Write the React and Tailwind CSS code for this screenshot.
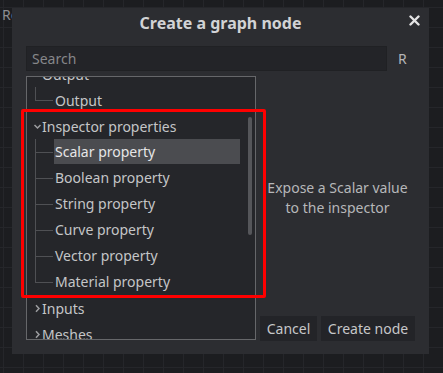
import React from 'react'

const font = { fontFamily: '"Noto Sans", "Open Sans", sans-serif' }

const Chevron = ({ open }) => (
  <svg width="9" height="9" viewBox="0 0 9 9" className="shrink-0">
    {open ? (
      <polyline points="1.5,3 4.5,6 7.5,3" fill="none" stroke="#9c9da0" strokeWidth="1.5" />
    ) : (
      <polyline points="3,1.2 6,4.5 3,7.8" fill="none" stroke="#9c9da0" strokeWidth="1.5" />
    )}
  </svg>
)

const GroupRow = ({ label, open }) => (
  <div className="flex items-center h-[26px] pl-[5px]">
    <div className="w-[10px] flex justify-center">
      <Chevron open={open} />
    </div>
    <span className="text-[14px] text-[#c4c5c7] whitespace-nowrap">{label}</span>
  </div>
)

const ChildRow = ({ label, last, selected }) => (
  <div className="flex h-[26px] pl-[8px] pr-[15px]">
    <div className="relative w-[19px] shrink-0">
      <div className={`absolute left-0 top-0 w-px bg-[#4f5054] ${last ? 'h-[13px]' : 'h-full'}`} />
      <div className="absolute left-0 top-[13px] w-[18px] h-px bg-[#4f5054]" />
    </div>
    <div
      className={`flex-1 flex items-center h-[25px] pl-px text-[14px] whitespace-nowrap ${
        selected ? 'bg-[#4b4c50] text-[#e6e6e7]' : 'text-[#c4c5c7]'
      }`}
    >
      {label}
    </div>
  </div>
)

const properties = [
  'Scalar property',
  'Boolean property',
  'String property',
  'Curve property',
  'Vector property',
  'Material property',
]

export default function App() {
  return (
    <div
      className="relative w-[443px] h-[373px] overflow-hidden bg-[#1c1d20]"
      style={{
        ...font,
        backgroundImage:
          'linear-gradient(to right, #25262a 1px, transparent 1px), linear-gradient(to bottom, #25262a 1px, transparent 1px)',
        backgroundSize: '20px 20px',
        backgroundPosition: '3px 7px',
      }}
    >
      {/* status text behind the dialog */}
      <div className="absolute left-[2px] top-[4px] text-[14px] text-[#8d8e91] whitespace-nowrap">
        Rendering halted
      </div>

      <div className="relative ml-[12px] mt-[8px] w-[417px] h-[346px] bg-[#2c2d31] flex flex-col">
        {/* Title */}
        <div className="relative h-[30px] flex items-center justify-center">
          <span className="text-[16px] font-bold text-[#d2d3d5]">Create a graph node</span>
          <svg width="11" height="11" viewBox="0 0 11 11" className="absolute right-[9px] top-[7px]">
            <path d="M1.5 1.5 L9.5 9.5 M9.5 1.5 L1.5 9.5" stroke="#e4e4e5" strokeWidth="2.4" strokeLinecap="round" />
          </svg>
        </div>

        {/* Search */}
        <div className="flex items-center mt-[8px] px-[14px]">
          <div className="w-[361px] h-[25px] bg-[#232428] border border-[#202124] flex items-center pl-[5px]">
            <span className="text-[14px] text-[#86878a]">Search</span>
          </div>
          <span className="ml-[11px] text-[14px] text-[#b4b5b7]">R</span>
        </div>

        {/* Body */}
        <div className="flex mt-[5px] px-[14px] gap-[4px]">
          <div className="relative w-[230px] h-[264px] border border-[#66676a] bg-[#25262a] overflow-hidden">
            <div className="mt-[-16px]">
              <GroupRow label="Output" open />
              <div className="flex h-[26px] pl-[8px]">
                <div className="relative w-[19px] shrink-0">
                  <div className="absolute left-0 top-0 w-px h-[13px] bg-[#4f5054]" />
                  <div className="absolute left-0 top-[13px] w-[18px] h-px bg-[#4f5054]" />
                </div>
                <div className="flex items-center pl-px text-[14px] text-[#c4c5c7]">Output</div>
              </div>
              <GroupRow label="Inspector properties" open />
              {properties.map((p, i) => (
                <ChildRow key={p} label={p} selected={i === 0} last={i === properties.length - 1} />
              ))}
              <GroupRow label="Inputs" />
              <GroupRow label="Meshes" />
            </div>
            {/* scrollbar */}
            <div className="absolute right-[3px] top-[40px] w-[4px] h-[118px] rounded-full bg-[#55565a]" />
          </div>

          <div className="flex-1 flex flex-col">
            <div className="flex-1 flex items-center justify-center text-center text-[14px] leading-[20px] text-[#b6b7b9] pt-[3px]">
              Expose a Scalar value
              <br />
              to the inspector
            </div>
            <div className="flex justify-end gap-[4px] mb-[-1px]">
              <div className="w-[57px] h-[25px] flex items-center justify-center bg-[#232428] text-[14px] text-[#c6c7c9]">
                Cancel
              </div>
              <div className="w-[94px] h-[25px] flex items-center justify-center bg-[#232428] text-[14px] text-[#c6c7c9]">
                Create node
              </div>
            </div>
          </div>
        </div>
      </div>

      {/* red highlight annotation */}
      <div className="absolute left-[21px] top-[109px] w-[245px] h-[189px] border-[3px] border-[#ff0000] rounded-[2px]" />
    </div>
  )
}
